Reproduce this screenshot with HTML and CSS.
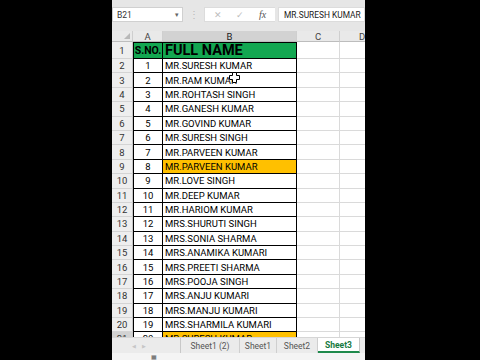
FILE: index.html
```html
<!DOCTYPE html>
<html>
<head>
<meta charset="utf-8">
<link rel="stylesheet" href="styles.css">
</head>
<body>
<div class="frame">
  <div class="ribbon-edge"></div>
  <div class="fbar">
    <div class="namebox"><span>B21</span><span class="dd">▾</span></div>
    <div class="vdots">⋮</div>
    <div class="fbtns"><span class="fx-x">✕</span><span class="fx-ok">✓</span><span class="fx">fx</span></div>
    <div class="finput">MR.SURESH KUMAR</div>
  </div>
  <div class="spacer"></div>
  <div class="sheet">
    <div class="row colhead">
      <div class="c rh corner"><span class="tri"></span></div>
      <div class="c ca">A</div>
      <div class="c cb sel">B</div>
      <div class="c cc">C</div>
      <div class="c cd">D</div>
    </div>
    <div class="row r1">
      <div class="c rh">1</div>
      <div class="c ca d g">S.NO.</div>
      <div class="c cb d g big">FULL NAME</div>
      <div class="c cc"></div><div class="c cd"></div>
    </div>
    <div class="row"><div class="c rh">2</div><div class="c ca d">1</div><div class="c cb d">MR.SURESH KUMAR</div><div class="c cc"></div><div class="c cd"></div></div>
    <div class="row"><div class="c rh">3</div><div class="c ca d">2</div><div class="c cb d">MR.RAM KUMAR</div><div class="c cc"></div><div class="c cd"></div></div>
    <div class="row"><div class="c rh">4</div><div class="c ca d">3</div><div class="c cb d">MR.ROHTASH SINGH</div><div class="c cc"></div><div class="c cd"></div></div>
    <div class="row"><div class="c rh">5</div><div class="c ca d">4</div><div class="c cb d">MR.GANESH KUMAR</div><div class="c cc"></div><div class="c cd"></div></div>
    <div class="row"><div class="c rh">6</div><div class="c ca d">5</div><div class="c cb d">MR.GOVIND KUMAR</div><div class="c cc"></div><div class="c cd"></div></div>
    <div class="row"><div class="c rh">7</div><div class="c ca d">6</div><div class="c cb d">MR.SURESH SINGH</div><div class="c cc"></div><div class="c cd"></div></div>
    <div class="row"><div class="c rh">8</div><div class="c ca d">7</div><div class="c cb d">MR.PARVEEN KUMAR</div><div class="c cc"></div><div class="c cd"></div></div>
    <div class="row"><div class="c rh">9</div><div class="c ca d">8</div><div class="c cb d o">MR.PARVEEN KUMAR</div><div class="c cc"></div><div class="c cd"></div></div>
    <div class="row"><div class="c rh">10</div><div class="c ca d">9</div><div class="c cb d">MR.LOVE SINGH</div><div class="c cc"></div><div class="c cd"></div></div>
    <div class="row"><div class="c rh">11</div><div class="c ca d">10</div><div class="c cb d">MR.DEEP KUMAR</div><div class="c cc"></div><div class="c cd"></div></div>
    <div class="row"><div class="c rh">12</div><div class="c ca d">11</div><div class="c cb d">MR.HARIOM KUMAR</div><div class="c cc"></div><div class="c cd"></div></div>
    <div class="row"><div class="c rh">13</div><div class="c ca d">12</div><div class="c cb d">MRS.SHURUTI SINGH</div><div class="c cc"></div><div class="c cd"></div></div>
    <div class="row"><div class="c rh">14</div><div class="c ca d">13</div><div class="c cb d">MRS.SONIA SHARMA</div><div class="c cc"></div><div class="c cd"></div></div>
    <div class="row"><div class="c rh">15</div><div class="c ca d">14</div><div class="c cb d">MRS.ANAMIKA KUMARI</div><div class="c cc"></div><div class="c cd"></div></div>
    <div class="row"><div class="c rh">16</div><div class="c ca d">15</div><div class="c cb d">MRS.PREETI SHARMA</div><div class="c cc"></div><div class="c cd"></div></div>
    <div class="row"><div class="c rh">17</div><div class="c ca d">16</div><div class="c cb d">MRS.POOJA SINGH</div><div class="c cc"></div><div class="c cd"></div></div>
    <div class="row"><div class="c rh">18</div><div class="c ca d">17</div><div class="c cb d">MRS.ANJU KUMARI</div><div class="c cc"></div><div class="c cd"></div></div>
    <div class="row"><div class="c rh">19</div><div class="c ca d">18</div><div class="c cb d">MRS.MANJU KUMARI</div><div class="c cc"></div><div class="c cd"></div></div>
    <div class="row"><div class="c rh">20</div><div class="c ca d">19</div><div class="c cb d">MRS.SHARMILA KUMARI</div><div class="c cc"></div><div class="c cd"></div></div>
    <div class="row r21"><div class="c rh">21</div><div class="c ca d">20</div><div class="c cb d o">MR.SURESH KUMAR</div><div class="c cc"></div><div class="c cd"></div></div>
  </div>
  <div class="tabs">
    <div class="nav"><span>◀</span><span>▶</span></div>
    <div class="tab t1">Sheet1 (2)</div>
    <div class="tab t2">Sheet1</div>
    <div class="tab t3">Sheet2</div>
    <div class="tab active">Sheet3</div>
  </div>
  <div class="status"><span class="sicon">▦</span></div>
  <svg class="cursor" width="11" height="11" viewBox="0 0 11 11"><path d="M3.5 0.5h4v3h3v4h-3v3h-4v-3h-3v-4h3z" fill="#fff" stroke="#000" stroke-width="1"/></svg>
</div>
</body>
</html>
```

FILE: styles.css
```css
* { box-sizing: border-box; }
body { margin: 0; background: #000; width: 480px; height: 360px; overflow: hidden; }
.frame {
  position: relative;
  width: 253px; height: 360px; margin-left: 112px;
  background: #fff; display: flex; flex-direction: column; overflow: hidden;
  font-family: Roboto, "Liberation Sans", sans-serif; color: #000;
}
.ribbon-edge { height: 7px; background: #e6e6e6; flex: none; }
.fbar { height: 15px; flex: none; background: #e6e6e6; display: flex; align-items: stretch; }
.namebox {
  width: 71px; background: #fff; border: 1px solid #d0d0d0; display: flex; align-items: center;
  justify-content: space-between; padding: 0 3px 0 4px; font-size: 8.5px; color: #333;
}
.dd { font-size: 7px; color: #666; }
.vdots { width: 21px; display: flex; align-items: center; justify-content: center; font-size: 10px; color: #b8b8b8; }
.fbtns {
  width: 71px; background: #fff; display: flex; align-items: center; border: 1px solid #dcdcdc; border-right: none;
  font-size: 9px; color: #bdbdbd;
}
.fx-x { margin-left: 9px; }
.fx-ok { margin-left: 14px; }
.fx { margin-left: 15px; font-style: italic; font-family: "Liberation Serif", serif; color: #555; font-size: 10px; }
.finput {
  flex: 1; background: #fff; border: 1px solid #dcdcdc; margin-left: 3px; font-size: 8.4px; color: #222;
  display: flex; align-items: center; padding-left: 5px; white-space: nowrap; overflow: hidden;
}
.spacer { height: 9px; flex: none; background: #e6e6e6; }
.sheet { height: 306px; flex: none; overflow: hidden; background: #fff; }
.row { display: flex; height: 14.4px; }
.c {
  flex: none; height: 100%; border-right: 1px solid #dadada; border-bottom: 1px solid #dadada;
  display: flex; align-items: center; font-size: 9.5px; white-space: nowrap; overflow: hidden;
}
.rh { width: 21px; background: #eeeeee; color: #333; justify-content: center; border-right-color: #c6c6c6; border-bottom-color: #d4d4d4; font-size: 9.5px; }
.ca { width: 30px; justify-content: center; }
.cb { width: 134px; padding-left: 2px; }
.cc { width: 43px; }
.cd { width: 46px; }
.colhead { height: 11px; }
.colhead .c { background: #e9e9e9; color: #444; justify-content: center; font-size: 9.5px; border-bottom-color: #bdbdbd; border-right-color: #cfcfcf; padding: 0; }
.colhead .sel { background: #d2d2d2; color: #222; }
.colhead .cd { justify-content: flex-start; padding-left: 19px; }
.corner { position: relative; }
.tri {
  position: absolute; right: 2px; bottom: 2px; width: 0; height: 0;
  border-left: 6px solid transparent; border-bottom: 6px solid #b8b8b8;
}
.r1 { height: 17px; }
.r21 .c { align-items: flex-start; padding-top: 1px; }
.r21 .rh { background: #d2d2d2; }
.d { border-right-color: #000; border-bottom-color: #000; }
.ca.d { border-left: 1px solid #000; }
.r1 .d { border-top: 1px solid #000; }
.g { background: #13a751; font-weight: bold; font-size: 10.5px; }
.big { font-size: 14.5px; padding-left: 2px; }
.o { background: #ffc000; }
.tabs {
  height: 16px; flex: none; background: #ebebeb; display: flex; align-items: stretch;
  font-size: 8.5px; color: #555; border-top: 1px solid #d6d6d6;
}
.nav { width: 69px; display: flex; align-items: center; gap: 6px; padding-left: 20px; font-size: 5px; color: #c6c6c6; border-right: 1px solid #c8c8c8; }
.tab { display: flex; align-items: center; justify-content: center; border-right: 1px solid #cfcfcf; }
.t1 { width: 59px; }
.t2 { width: 37px; }
.t3 { width: 41px; }
.active { width: 42px; background: #fff; color: #177a3f; font-weight: bold; border-bottom: 2px solid #1f8a4c; border-right: 1px solid #c6c6c6; }
.status { flex: 1; background: #f4f4f4; display: flex; align-items: center; padding-left: 39px; }
.sicon { font-size: 6px; color: #555; line-height: 1; }
.cursor { position: absolute; left: 117px; top: 72px; }
```
